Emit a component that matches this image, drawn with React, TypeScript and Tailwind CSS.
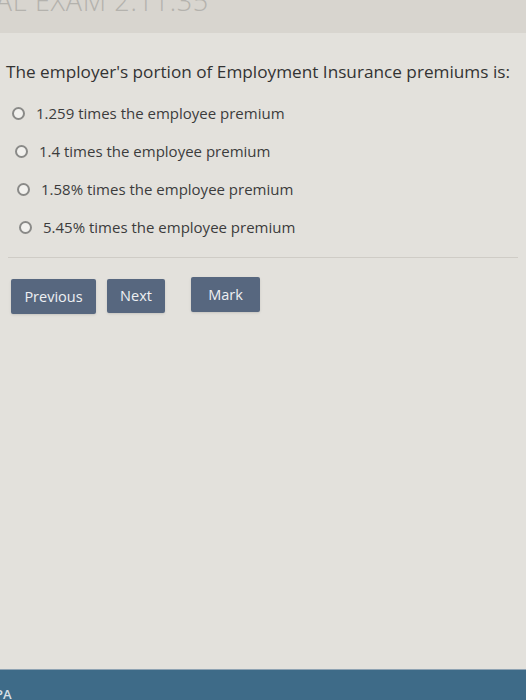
import React from "react";

const OPTIONS = [
  { label: "1.259 times the employee premium", indent: "pl-[12px]" },
  { label: "1.4 times the employee premium", indent: "pl-[15px]" },
  { label: "1.58% times the employee premium", indent: "pl-[17px]" },
  { label: "5.45% times the employee premium", indent: "pl-[19px]" },
];

function Radio(): React.ReactElement {
  return <span className="inline-block h-[13px] w-[13px] shrink-0 rounded-full border-2 border-[#8a8a88] bg-[#f2f1ee]" />;
}

export default function App(): React.ReactElement {
  return (
    <div
      className="flex h-[700px] w-[526px] flex-col overflow-hidden bg-[#e3e1dc] text-[#3a3a3a]"
      style={{ fontFamily: '"Open Sans", "Liberation Sans", sans-serif' }}
    >
      <div className="relative h-[33px] shrink-0 bg-[#d8d5cf]">
        <div className="absolute left-[-46px] top-[-18px] whitespace-nowrap text-[27px] leading-[37px] font-light tracking-wide text-[#b4b2ad]">
          FINAL EXAM 2:11:35
        </div>
      </div>

      <div className="shrink-0 whitespace-nowrap px-[6px] pt-[25px] text-[17.2px] leading-[28px] text-[#333]">
        The employer's portion of Employment Insurance premiums is:
      </div>

      <div className="flex flex-col gap-[14px] pt-[15px]">
        {OPTIONS.map((o) => (
          <div key={o.label} className={`flex items-center gap-[11px] ${o.indent} text-[15px] leading-[24px] text-[#3c3c3c]`}>
            <Radio />
            <span>{o.label}</span>
          </div>
        ))}
      </div>

      <div className="mx-[8px] mt-[18px] border-t border-[#cfccc6]" />

      <div className="flex items-start pl-[11px] pt-[21px]">
        <button className="h-[35px] w-[85px] rounded-[2px] bg-[#57677f] text-[14.5px] text-[#eef0f3] shadow-sm">
          Previous
        </button>
        <button className="ml-[11px] h-[34px] w-[58px] rounded-[2px] bg-[#57677f] text-[14.5px] text-[#eef0f3] shadow-sm">
          Next
        </button>
        <button className="ml-[26px] mt-[-2px] h-[35px] w-[69px] rounded-[2px] bg-[#57677f] text-[14.5px] text-[#eef0f3] shadow-sm">
          Mark
        </button>
      </div>

      <div className="flex-1" />

      <div className="relative h-[31px] shrink-0 border-t border-[#8fa3b3] bg-[#3e6b88]">
        <span className="absolute bottom-[-4px] left-[-5px] text-[13px] font-semibold text-[#d8e0e6]">PA</span>
      </div>
    </div>
  );
}
